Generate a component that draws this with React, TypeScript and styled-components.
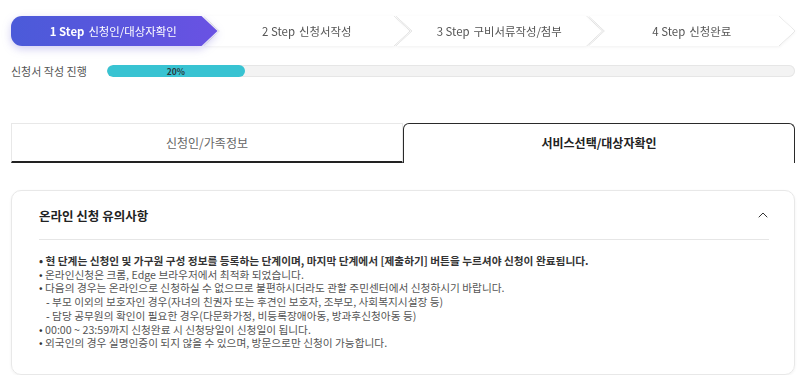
import styled, { createGlobalStyle } from 'styled-components';
import { ChevronUp } from 'lucide-react';

const GlobalStyle = createGlobalStyle`
  html, body {
    margin: 0;
    padding: 0;
    background: #ffffff;
  }
  body {
    font-family: "Noto Sans CJK KR", "Noto Sans", sans-serif;
    color: #333;
  }
  * { box-sizing: border-box; }
`;

const Page = styled.div`
  width: 800px;
  padding: 16px 5px 0 11px;
`;

const Steps = styled.div`
  display: flex;
  height: 30px;
`;

const StepWrap = styled.div<{ $active?: boolean; $first?: boolean }>`
  flex: 1;
  margin-left: ${({ $first }) => ($first ? '0' : '-14px')};
  position: relative;
  z-index: ${({ $active }) => ($active ? 2 : 1)};
  filter: ${({ $active }) =>
    $active
      ? 'drop-shadow(0 3px 4px rgba(90, 80, 210, 0.28))'
      : 'drop-shadow(0 0 0.6px rgba(0, 0, 0, 0.35)) drop-shadow(0 1px 1.5px rgba(0, 0, 0, 0.06))'};
`;

const StepShape = styled.div<{ $active?: boolean; $first?: boolean }>`
  height: 100%;
  display: flex;
  align-items: center;
  justify-content: center;
  padding: ${({ $first }) => ($first ? '0 16px 0 14px' : '0 16px')};
  background: ${({ $active }) =>
    $active ? 'linear-gradient(90deg, #4b5bd9 0%, #5c55de 60%, #6a52e3 100%)' : '#ffffff'};
  border-radius: ${({ $first }) => ($first ? '11px 0 0 11px' : '0')};
  clip-path: ${({ $first }) =>
    $first
      ? 'polygon(0 0, calc(100% - 16px) 0, 100% 50%, calc(100% - 16px) 100%, 0 100%)'
      : 'polygon(0 0, calc(100% - 16px) 0, 100% 50%, calc(100% - 16px) 100%, 0 100%, 16px 50%)'};
  color: ${({ $active }) => ($active ? '#ffffff' : '#555555')};
  font-size: 11.4px;
  white-space: nowrap;
`;

const StepNo = styled.span<{ $active?: boolean }>`
  font-weight: ${({ $active }) => ($active ? 700 : 400)};
  margin-right: 4px;
`;

const ProgressRow = styled.div`
  display: flex;
  align-items: center;
  margin-top: 18px;
  height: 14px;
`;

const ProgressLabel = styled.div`
  width: 96px;
  font-size: 11px;
  color: #555;
`;

const Track = styled.div`
  flex: 1;
  height: 12px;
  border-radius: 6px;
  background: #f3f3f3;
  box-shadow: inset 0 0 0 1px #e6e6e6;
  overflow: hidden;
`;

const Fill = styled.div`
  height: 100%;
  border-radius: 6px;
  background: #38c3d2;
  display: flex;
  align-items: center;
  justify-content: center;
  font-size: 8.5px;
  font-weight: 700;
  color: #2a3a40;
  line-height: 1;
`;

const Tabs = styled.div`
  display: flex;
  margin-top: 45px;
  height: 40px;
`;

const Tab = styled.div<{ $active?: boolean }>`
  flex: 1;
  display: flex;
  align-items: center;
  justify-content: center;
  font-size: 12px;
  font-weight: ${({ $active }) => ($active ? 700 : 400)};
  color: ${({ $active }) => ($active ? '#222' : '#666')};
  background: #fff;
  border: ${({ $active }) => ($active ? '1.5px solid #2a2a2a' : '1px solid #e8e8e8')};
  border-bottom: ${({ $active }) => ($active ? 'none' : '2px solid #222')};
  border-radius: ${({ $active }) => ($active ? '6px 6px 0 0' : '0')};
  padding-bottom: ${({ $active }) => ($active ? '2px' : '0')};
`;

const Card = styled.section`
  margin-top: 27px;
  border: 1px solid #e8e8e8;
  border-radius: 10px;
  box-shadow: 0 1px 3px rgba(0, 0, 0, 0.06);
  padding: 0 25px 24px 27px;
`;

const CardHeader = styled.div`
  display: flex;
  align-items: center;
  justify-content: space-between;
  height: 49px;
  border-bottom: 1px solid #e6e6e6;
`;

const CardTitle = styled.h2`
  margin: 0;
  font-size: 12.5px;
  font-weight: 700;
  color: #222;
`;

const Toggle = styled.span`
  display: flex;
  color: #333;
  margin-right: -2px;
`;

const Notes = styled.ul`
  list-style: none;
  margin: 0;
  padding: 14px 0 0;
`;

const Note = styled.li<{ $bold?: boolean; $sub?: boolean }>`
  font-size: 10.7px;
  line-height: 13.7px;
  color: ${({ $bold }) => ($bold ? '#333' : '#555')};
  font-weight: ${({ $bold }) => ($bold ? 700 : 400)};
  padding-left: ${({ $sub }) => ($sub ? '7px' : '0')};
  white-space: nowrap;

  &::before {
    content: '${({ $sub }) => ($sub ? '- ' : '• ')}';
    color: #333;
  }
`;

const steps = [
  { no: '1 Step', label: '신청인/대상자확인' },
  { no: '2 Step', label: '신청서작성' },
  { no: '3 Step', label: '구비서류작성/첨부' },
  { no: '4 Step', label: '신청완료' },
];

const notes: { text: string; bold?: boolean; sub?: boolean }[] = [
  {
    text: '현 단계는 신청인 및 가구원 구성 정보를 등록하는 단계이며, 마지막 단계에서 [제출하기] 버튼을 누르셔야 신청이 완료됩니다.',
    bold: true,
  },
  { text: '온라인신청은 크롬, Edge 브라우저에서 최적화 되었습니다.' },
  { text: '다음의 경우는 온라인으로 신청하실 수 없으므로 불편하시더라도 관할 주민센터에서 신청하시기 바랍니다.' },
  { text: '부모 이외의 보호자인 경우(자녀의 친권자 또는 후견인 보호자, 조부모, 사회복지시설장 등)', sub: true },
  { text: '담당 공무원의 확인이 필요한 경우(다문화가정, 비등록장애아동, 방과후신청아동 등)', sub: true },
  { text: '00:00 ~ 23:59까지 신청완료 시 신청당일이 신청일이 됩니다.' },
  { text: '외국인의 경우 실명인증이 되지 않을 수 있으며, 방문으로만 신청이 가능합니다.' },
];

export default function App() {
  const progress = 20;

  return (
    <Page>
      <GlobalStyle />
      <Steps>
        {steps.map((s, i) => (
          <StepWrap key={s.no} $first={i === 0} $active={i === 0}>
            <StepShape $first={i === 0} $active={i === 0}>
              <StepNo $active={i === 0}>{s.no}</StepNo>
              {s.label}
            </StepShape>
          </StepWrap>
        ))}
      </Steps>

      <ProgressRow>
        <ProgressLabel>신청서 작성 진행</ProgressLabel>
        <Track>
          <Fill style={{ width: `${progress}%` }}>{progress}%</Fill>
        </Track>
      </ProgressRow>

      <Tabs>
        <Tab>신청인/가족정보</Tab>
        <Tab $active>서비스선택/대상자확인</Tab>
      </Tabs>

      <Card>
        <CardHeader>
          <CardTitle>온라인 신청 유의사항</CardTitle>
          <Toggle>
            <ChevronUp size={16} strokeWidth={1.5} />
          </Toggle>
        </CardHeader>
        <Notes>
          {notes.map((n) => (
            <Note key={n.text} $bold={n.bold} $sub={n.sub}>
              {n.text}
            </Note>
          ))}
        </Notes>
      </Card>
    </Page>
  );
}
